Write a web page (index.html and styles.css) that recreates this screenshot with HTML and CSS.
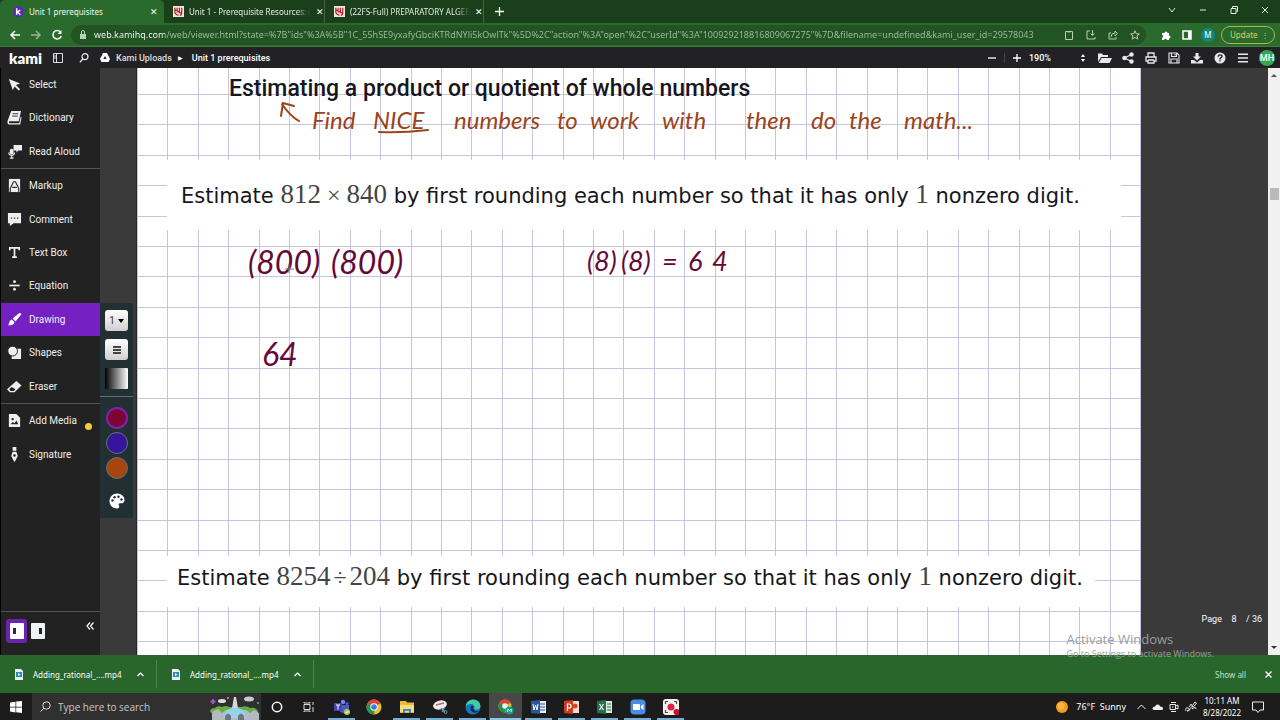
FILE: index.html
```html
<!DOCTYPE html>
<html lang="en">
<head>
<meta charset="utf-8">
<title>Unit 1 prerequisites</title>
<link rel="stylesheet" href="styles.css">
</head>
<body>
<header class="tabs">
  <div class="tab tab-active"><svg class="fav" viewBox="0 0 12 12"><circle cx="6" cy="6" r="6" fill="#5b2bb5"/><path d="M4 2.5v7M8 4.5L5 6.5l3 3" fill="none" stroke="#fff" stroke-width="1.6"/></svg><span class="tab-name">Unit 1 prerequisites</span><button class="x" aria-label="Close tab">✕</button></div>
  <div class="tab"><svg class="fav" viewBox="0 0 12 12"><path fill="#f4e4e0" d="M0 0h12v12H0z"/><path d="M2 2v5q1 3 4 3M4.500 2v5M7 2v6M9.500 2v5q0 3-2 3M2 4l7 4" fill="none" stroke="#b51f2b" stroke-width="1.300"/></svg><span class="tab-name fade">Unit 1 - Prerequisite Resources: (</span><button class="x" aria-label="Close tab">✕</button></div>
  <div class="tab tab-line"><svg class="fav" viewBox="0 0 12 12"><path fill="#f4e4e0" d="M0 0h12v12H0z"/><path d="M2 2v5q1 3 4 3M4.500 2v5M7 2v6M9.500 2v5q0 3-2 3M2 4l7 4" fill="none" stroke="#b51f2b" stroke-width="1.300"/></svg><span class="tab-name fade">(22FS-Full) PREPARATORY ALGEB</span><button class="x" aria-label="Close tab">✕</button></div>
  <button class="newtab" aria-label="New tab"><svg width="9" height="9" viewBox="0 0 9 9"><path d="M4.500 0v9M0 4.500h9" stroke="#fff" stroke-width="1.300"/></svg></button>
  <div class="winctl">
    <button aria-label="Search tabs"><svg width="10" height="10" viewBox="0 0 10 10"><path d="M2 3l3 4 3-4"/></svg></button>
    <button aria-label="Minimize"><svg width="10" height="10" viewBox="0 0 10 10"><path d="M2 5h6"/></svg></button>
    <button aria-label="Restore"><svg width="10" height="10" viewBox="0 0 10 10"><path d="M2 3.500h5v5H2zM3.500 3V1.500h5v5H7.500"/></svg></button>
    <button aria-label="Close"><svg width="10" height="10" viewBox="0 0 10 10"><path d="M2 2l6 6M8 2l-6 6"/></svg></button>
  </div>
</header>

<div class="toolbar">
  <nav class="nav">
    <button aria-label="Back"><svg width="12" height="12" viewBox="0 0 12 12"><path d="M11 6H2M6 2L2 6l4 4"/></svg></button>
    <button aria-label="Forward" class="dim"><svg width="12" height="12" viewBox="0 0 12 12"><path d="M1 6h9M6 2l4 4-4 4"/></svg></button>
    <button aria-label="Reload"><svg width="12" height="12" viewBox="0 0 12 12"><path d="M9.500 3.200A4.200 4.200 0 1 0 10.200 7"/><path d="M10.500 1v4h-4z" fill="#fff" stroke="none"/></svg></button>
  </nav>
  <div class="address">
    <svg width="6" height="9" viewBox="0 0 6 9"><path d="M0 4h6v5H0z" fill="#b9d0b8"/><path d="M1.500 4V2a1.500 1.500 0 0 1 3 0v2" fill="none" stroke="#b9d0b8"/></svg>
    <input class="url" aria-label="Address" value="web.kamihq.com/web/viewer.html?state=%7B&quot;ids&quot;%3A%5B&quot;1C_55hSE9yxafyGbciKTRdNYli5kOwlTk&quot;%5D%2C&quot;action&quot;%3A&quot;open&quot;%2C&quot;userId&quot;%3A&quot;100929218816809067275&quot;%7D&amp;filename=undefined&amp;kami_user_id=29578043">
    <div class="addr-icons">
      <svg viewBox="0 0 10 10"><path d="M1.500 1.500h7v8h-7zM3.500 2h3"/></svg>
      <svg viewBox="0 0 10 10"><path d="M4 1H1v8h8V7M6.500 0v5M4.500 3.500l2 2 2-2"/></svg>
      <svg viewBox="0 0 10 10"><path d="M3 3H1v6h7V7M3 7q0-4 4-4V1l2.500 2.500L7 6V4.500"/></svg>
      <svg viewBox="0 0 10 10"><path d="M5 .8l1.200 2.900 3.200.2-2.400 2 .8 3.200L5 7.400 2.200 9.100 3 5.900.6 3.900l3.200-.2z"/></svg>
    </div>
  </div>
  <button class="ext" aria-label="Extensions"><svg width="10" height="10" viewBox="0 0 10 10"><path fill="#fff" d="M1 3h2.500a1.500 1.500 0 1 1 3 0H8v2.500a1.500 1.500 0 0 1 0 3V10H5.800a1.300 1.300 0 0 0-2.600 0H1V7.500a1.300 1.300 0 0 0 0-2.600z"/></svg></button>
  <button class="ext" aria-label="Side panel"><svg width="10" height="10" viewBox="0 0 10 10"><path d="M1 1h8v8H1z" fill="none" stroke="#fff" stroke-width="1.500"/><path d="M6 1h3v8H6z" fill="#fff"/></svg></button>
  <button class="profile">M</button>
  <button class="update">Update <span>⋮</span></button>
</div>

<div class="kamibar">
  <span class="logo">kami</span>
  <button aria-label="Toggle panel"><svg width="10" height="10" viewBox="0 0 10 10"><path d="M.5 .5h9v9h-9zM3.500 1v8M1 3h2M1 5h2" fill="none" stroke="#ddd"/></svg></button>
  <button class="find" aria-label="Search"><svg width="10" height="10" viewBox="0 0 10 10"><circle cx="6" cy="3.700" r="3" fill="none" stroke="#eee" stroke-width="1.200"/><path d="M3.800 6L.8 9.400" stroke="#eee" stroke-width="1.300"/></svg></button>
  <svg class="drive" width="10" height="9" viewBox="0 0 10 9"><path fill="#fff" d="M3 0h4l3 6-1.500 3h-7L0 6z"/><path fill="#222" d="M5 3L3.300 6h3.400z"/></svg>
  <a href="#" class="crumb">Kami Uploads</a><span class="caret">▶</span><a href="#" class="crumb doc">Unit 1 prerequisites</a>
  <div class="kright">
    <button aria-label="Zoom out"><svg width="8" height="8" viewBox="0 0 8 8"><path d="M0 4h8" stroke="#fff" stroke-width="1.300"/></svg></button><i class="sep"></i>
    <button aria-label="Zoom in"><svg width="8" height="8" viewBox="0 0 8 8"><path d="M0 4h8M4 0v8" stroke="#fff" stroke-width="1.300"/></svg></button>
    <select class="zoom" aria-label="Zoom level"><option>190%</option></select>
    <svg class="updown" width="4" height="8" viewBox="0 0 4 8"><path fill="#fff" d="M2 0l2 3H0zM2 8L0 5h4z"/></svg>
    <div class="kicons">
      <button aria-label="Open"><svg viewBox="0 0 14 12"><path fill="#e8e8f2" d="M0 10V1.500h4l1 1.500h5v2H3zM3.500 6H14l-2.500 5H.8z"/></svg></button>
      <button aria-label="Share"><svg viewBox="0 0 14 12"><g fill="#e8e8f2"><circle cx="3.500" cy="6" r="2.300"/><circle cx="10.500" cy="2.500" r="2.200"/><circle cx="10.500" cy="9.500" r="2.200"/></g><path d="M10.500 2.500L3.500 6l7 3.500" fill="none" stroke="#e8e8f2" stroke-width="1.200"/></svg></button>
      <button aria-label="Print"><svg viewBox="0 0 14 12"><path d="M4 5V1h6v4M2 9V5h10v4h-2v2H4V9zM4 8h6" fill="none" stroke="#e8e8f2" stroke-width="1.300"/></svg></button>
      <button aria-label="Save"><svg viewBox="0 0 14 12"><path d="M2 1h8l2 2v8H2zM4.500 1v3.500h5V1M4 11V7h6v4M8 2v1.500" fill="none" stroke="#e8e8f2" stroke-width="1.100"/></svg></button>
      <button aria-label="Download"><svg viewBox="0 0 14 12"><path fill="#e8e8f2" d="M5.500 1h3v3.500H11l-4 4-4-4h2.500zM1 8h3l3 2.500L10 8h3v3.500H1z"/></svg></button>
      <button aria-label="Help"><svg viewBox="0 0 14 12"><circle cx="7" cy="6" r="5.500" fill="#e8e8f2"/><path d="M5.200 4.800q0-1.900 1.900-1.900T9 4.600Q9 5.600 7 6.400V7.400M7 8.300v1.300" fill="none" stroke="#222" stroke-width="1.400"/></svg></button>
      <button aria-label="Menu"><svg viewBox="0 0 14 12"><path d="M2 2.200h10M2 6h10M2 9.800h10" stroke="#e8e8f2" stroke-width="1.500"/></svg></button>
    </div>
    <button class="mh">MH</button>
  </div>
</div>

<main class="main">
  <aside class="side">
    <div class="group basics">
      <button><svg viewBox="0 0 16 16"><path fill="#eee" d="M2 2l12 5-4.500 1.500L14 13l-1.500 1.500L8 10l-1.800 4z"/></svg>Select</button>
      <button><svg viewBox="0 0 16 16"><path fill="#eee" d="M4.500 1H15l-2.500 11H3q-1 0-1 1t1 1h10l1.700-7 .8 1-1.500 7.500H2.500Q0 15 .5 12z"/><path d="M6 4h6M5.500 6.500h6" stroke="#333"/></svg>Dictionary</button>
      <button><svg viewBox="0 0 16 16"><path fill="#eee" d="M7 1h9v6h-4l-2 2V7H7z"/><rect x="3" y="5" width="4" height="6" rx="2" fill="#eee"/><path d="M2 9q0 3 3 3t3-3M5 12v3M3 15h4" fill="none" stroke="#eee" stroke-width="1.200"/></svg>Read Aloud</button>
    </div>
    <div class="group markups">
      <button><svg viewBox="0 0 16 16"><path fill="#eee" d="M2 1h12v14H2z"/><path d="M3.500 15V11L7 4h2l3.500 7v4M5.500 10h5" fill="none" stroke="#333" stroke-width="1.300"/></svg>Markup</button>
      <button><svg viewBox="0 0 16 16"><path fill="#eee" d="M1 1h14v11H7l-4 3v-3H1z"/><path d="M4 6.500h1.500M7.300 6.500h1.500M10.600 6.500h1.500" stroke="#333" stroke-width="1.500"/></svg>Comment</button>
      <button><svg viewBox="0 0 16 16"><path d="M3 5.500V3h10v2.500M8 3v10M5.500 13h5" fill="none" stroke="#eee" stroke-width="1.800"/></svg>Text Box</button>
      <button><svg viewBox="0 0 16 16"><path d="M2.500 8h11" stroke="#eee" stroke-width="1.800"/><circle cx="8" cy="4" r="1.500" fill="#eee"/><circle cx="8" cy="12" r="1.500" fill="#eee"/></svg>Equation</button>
      <button class="on"><svg viewBox="0 0 16 16"><path fill="#fff" d="M13 1q3 0 2 2L9 10 6 7zM5 8l3 3q-1 4-7 3 1.500-1 1.500-3T5 8z"/></svg>Drawing</button>
      <button><svg viewBox="0 0 16 16"><path fill="#eee" d="M9.500 4H15v11H5v-4z"/><circle cx="6" cy="6.500" r="5.200" fill="#eee" stroke="#222"/></svg>Shapes</button>
      <button><svg viewBox="0 0 16 16"><path fill="#eee" d="M10 2l5.500 5L8 14H3L0 11z"/><path d="M5 8.500L2.300 11l1.600 1.700h3.500L9 11" fill="#222"/></svg>Eraser</button>
    </div>
    <div class="group extras">
      <button><svg viewBox="0 0 16 16"><path fill="#eee" d="M2 1h8l4 4v10H2z"/><circle cx="6" cy="6.500" r="1.300" fill="#222"/><path d="M4 12l2-2.500L8 11l2-3 2 4z" fill="#222"/></svg>Add Media<i class="dot"></i></button>
      <button><svg viewBox="0 0 16 16"><path fill="#eee" d="M6 0h4v4H6zM6 5h4l1.500 4.500L8.500 15.500h-1L4.500 9.500z"/><circle cx="8" cy="9" r="1.300" fill="#222"/></svg>Signature</button>
    </div>
    <div class="sidefoot">
      <button class="dock dock-on" aria-label="Dock left"><svg width="14" height="16" viewBox="0 0 14 16"><rect width="14" height="16" rx="1" fill="#fff"/><path d="M3 5h3v6H3z" fill="#36205c"/></svg></button>
      <button class="dock" aria-label="Dock right"><svg width="14" height="16" viewBox="0 0 14 16"><rect width="14" height="16" rx="1" fill="#eef2f5"/><path d="M8 5h3v6H8z" fill="#222"/></svg></button>
      <button class="collapse" aria-label="Collapse"><svg width="8" height="8" viewBox="0 0 8 8"><path d="M4 .5L1 4l3 3.500M7.500 .5L4.500 4l3 3.500" fill="none" stroke="#fff" stroke-width="1.200"/></svg></button>
    </div>
  </aside>

  <div class="rail">
    <div class="palette">
      <div class="pal-top">
        <button class="box">1<svg width="6" height="4" viewBox="0 0 6 4"><path d="M0 0h6L3 4z"/></svg></button>
        <button class="box" aria-label="Line style"><svg width="8" height="8" viewBox="0 0 8 8"><path d="M0 1h8M0 4h8M0 7h8" stroke="#111" stroke-width="1.500"/></svg></button>
        <button class="box shade" aria-label="Opacity"></button>
      </div>
      <div class="pal-bottom">
        <button class="ink ink-wine" aria-label="Wine"></button>
        <button class="ink ink-blue" aria-label="Blue"></button>
        <button class="ink ink-orange" aria-label="Orange"></button>
        <button class="more" aria-label="More colors"><svg width="16" height="16" viewBox="0 0 16 16"><path fill="#fff" d="M8 .5c4.500 0 7.500 3 7.500 6.500 0 2.500-2 3.500-4 3.300-1.500-.1-2.500.7-1.500 2.200.8 1.500 0 3-2 3C3.500 15.500.5 12 .5 8S4 .5 8 .5z"/><g fill="#24303a"><circle cx="3.500" cy="7.500" r="1.200"/><circle cx="5.500" cy="4.200" r="1.200"/><circle cx="9.500" cy="3.700" r="1.200"/><circle cx="12.500" cy="6.500" r="1.200"/></g></svg></button>
      </div>
    </div>
  </div>

  <article class="page">
    <svg class="grid" width="100%" height="100%" aria-hidden="true">
      <defs><pattern id="squares" width="152" height="152" y="26" patternUnits="userSpaceOnUse"><path d="M.5 0v152M30.500 0v152M61.500 0v152M91.500 0v152M122.500 0v152M0 .5h152M0 30.500h152M0 61.500h152M0 91.500h152M0 122.500h152" stroke="#c5c4e2" fill="none"/></pattern></defs>
      <rect width="100%" height="100%" fill="url(#squares)"/>
    </svg>
    <h1 class="title">Estimating a product or quotient of whole numbers</h1>
    <p class="problem">Estimate <span class="num">812<span class="op"> × </span>840</span> by first rounding each number so that it has only <span class="num">1</span> nonzero digit.</p>
    <p class="problem second">Estimate <span class="num">8254<span class="op tight">÷</span>204</span> by first rounding each number so that it has only <span class="num">1</span> nonzero digit.</p>
    <svg class="notes" width="100%" height="100%">
      <g class="arrow"><path d="M162 53Q153 48 145 36M144 48L146 35 157 38"/><path d="M242 64Q265 65 291 62"/></g>
      <g class="pen-orange">
        <text x="175" y="61">Find</text><text x="236" y="61">NICE</text><text x="317" y="61">numbers</text><text x="420" y="61">to</text><text x="453" y="61">work</text><text x="525" y="61">with</text><text x="609" y="61">then</text><text x="674" y="61">do</text><text x="712" y="61">the</text><text x="767" y="61">math...</text>
      </g>
      <g class="pen-wine">
        <text x="111" y="206">(800)</text><text x="194" y="206">(800)</text><text x="125" y="298">64</text>
        <g class="small"><text x="450" y="203">(8)</text><text x="484" y="203">(8)</text><text x="525" y="203">=</text><text x="551" y="203">6</text><text x="575" y="203">4</text></g>
      </g>
      <path d="M152 196v9M148 201h9" stroke="#777"/>
    </svg>
  </article>
  <div class="gutter">
    <label class="pager">Page <input class="pageno" value="8"> <span>/ 36</span></label>
  </div>
  <div class="scroll"><i class="up"></i><i class="thumb"></i><i class="down"></i></div>
  <div class="activate"><b>Activate Windows</b><span>Go to Settings to activate Windows.</span></div>
</main>

<section class="downloads">
  <div class="dl"><svg width="8" height="11" viewBox="0 0 8 11"><path fill="#e9f3f8" d="M0 0h6l2 2v9H0z"/><path fill="#3189b5" d="M1 3h6v5H1z"/><path fill="#fff" d="M3 4l2.500 1.500L3 7z"/></svg><button class="dl-name">Adding_rational_....mp4</button><button aria-label="Options"><svg width="7" height="5" viewBox="0 0 7 5"><path d="M.5 4l3-3 3 3" fill="none" stroke="#fff" stroke-width="1.200"/></svg></button></div>
  <div class="dl"><svg width="8" height="11" viewBox="0 0 8 11"><path fill="#e9f3f8" d="M0 0h6l2 2v9H0z"/><path fill="#3189b5" d="M1 3h6v5H1z"/><path fill="#fff" d="M3 4l2.500 1.500L3 7z"/></svg><button class="dl-name">Adding_rational_....mp4</button><button aria-label="Options"><svg width="7" height="5" viewBox="0 0 7 5"><path d="M.5 4l3-3 3 3" fill="none" stroke="#fff" stroke-width="1.200"/></svg></button></div>
  <button class="showall">Show all</button><button class="dlx" aria-label="Close"><svg width="7" height="7" viewBox="0 0 7 7"><path d="M.5 .5l6 6M6.500 .5l-6 6" stroke="#fff" stroke-width="1.400"/></svg></button>
</section>

<footer class="taskbar">
  <button class="start" aria-label="Start"><svg width="12" height="12" viewBox="0 0 12 12"><path fill="#fff" d="M0 1.500l5.500-.8v5H0zM6.200.6L12 0v5.700H6.200zM0 6.400h5.500v5L0 10.600zM6.200 6.400H12V12l-5.800-.7z"/></svg></button>
  <div class="search"><svg width="11" height="11" viewBox="0 0 11 11"><circle cx="6.500" cy="4.500" r="3.700" fill="none" stroke="#ddd"/><path d="M4 7.200L.5 10.500" stroke="#ddd"/></svg><input aria-label="Search" placeholder="Type here to search">
    <svg class="scene" width="52" height="24" viewBox="0 0 52 24"><path d="M4 3v5M1.500 5.500h5" stroke="#9b59d0" stroke-width="2"/><ellipse cx="13" cy="5" rx="4" ry="2" fill="#ddd"/><ellipse cx="40" cy="3" rx="5" ry="2.500" fill="#c9c9d2"/><path d="M1 16q0-4 5-4 3-3 7-1 4-2 7 0h13q4-2 8 1 7-1 8 4l-8 4H8z" fill="#64ad45"/><path d="M3 16l6-3 4 4 4-3h20l4 3 4-3 5 3v7H3z" fill="#b4b9c1"/><path d="M23 12l2-11h2l2 11z" fill="#d6d6de"/><path d="M18 14q8-5 16 0l3 8H14z" fill="#93d4e8"/><path d="M16 24v-4q3-5 6 0v4M29 24v-4q3-5 6 0v4" fill="#70747d"/><circle cx="49" cy="7" r="1" fill="#4bb6dc"/><circle cx="19" cy="2" r="1" fill="#e9a35a"/></svg></div>
  <div class="apps">
    <button class="plain" aria-label="Cortana"><svg viewBox="0 0 16 16"><circle cx="8" cy="8" r="4.700" fill="none" stroke="#fff" stroke-width="1.500"/></svg></button>
    <button class="plain" aria-label="Task view"><svg viewBox="0 0 16 16"><path d="M3 5.500h6v5H3zM3 3V4h6V3M3 13v-1h6v1M12 3v3M12 8v5" fill="none" stroke="#ddd"/></svg></button>
    <button aria-label="Teams"><svg viewBox="0 0 16 16"><circle cx="9" cy="3" r="2.200" fill="#7b83eb"/><circle cx="13" cy="4.500" r="1.600" fill="#5059c9"/><path d="M5 6h10v5q-2 4-6 3t-4-4z" fill="#5059c9"/><path d="M0 4h8v8H0z" fill="#4049ad"/><path d="M2 6h4M4 6v4.500" stroke="#fff"/><circle cx="13" cy="13" r="3" fill="#a8cf5b"/><path d="M11.500 13l1 1 2-2" fill="none" stroke="#fff"/></svg></button>
    <button class="plain" aria-label="Chrome"><svg viewBox="0 0 16 16"><circle cx="8" cy="8" r="7.500" fill="#e8be37"/><path d="M1.500 4.250A7.500 7.500 0 0 1 14.500 4.250L8 8z" fill="#db4437"/><path d="M1.500 4.250A7.500 7.500 0 0 0 8 15.500L9 8z" fill="#27924b"/><circle cx="8" cy="8" r="3.700" fill="#fff"/><circle cx="8" cy="8" r="2.800" fill="#3c79e0"/></svg></button>
    <button aria-label="File Explorer"><svg viewBox="0 0 16 16"><path d="M1 2h6l1 1.500h7V14H1z" fill="#e7ba3d"/><path d="M1 6h14v7H1z" fill="#f8db7a"/><path d="M4 10h8v4h-2v-2H6v2H4z" fill="#3a8bc4"/></svg></button>
    <button aria-label="Snip"><svg viewBox="0 0 16 16"><ellipse cx="8" cy="6" rx="7" ry="4.500" fill="#eee" transform="rotate(-15 8 6)"/><path d="M4 6l8-2" stroke="#d25b64" stroke-width="1.500"/><path d="M9 9l4 4M13 8l-3 5" stroke="#6d9bb2" stroke-width="1.300"/><circle cx="13.500" cy="13" r="1.500" fill="none" stroke="#6d9bb2"/></svg></button>
    <button aria-label="Edge"><svg viewBox="0 0 16 16"><circle cx="8" cy="8" r="7.500" fill="#1676ba"/><path d="M.8 8Q1 1 8 .5q7 0 7.500 6.500-.5 3.500-4 3.500-3 0-2-2Q9 4.500 6 5 2 5 .8 8z" fill="#43c8a9"/><path d="M6 7q-2 5 3 6.500 3 .6 5-1.500-5 1-6-3 1-1 .5-2z" fill="#102d4c"/></svg></button>
    <button class="current" aria-label="Chrome profile"><svg viewBox="0 0 16 16"><circle cx="7" cy="7" r="6.500" fill="#d9b93f"/><path d="M1.400 3.700A6.500 6.500 0 0 1 12.600 3.700L7 7z" fill="#db4437"/><path d="M1.400 3.700A6.500 6.500 0 0 0 7 13.500L8 7z" fill="#27924b"/><circle cx="7" cy="7" r="2.800" fill="#eee"/><circle cx="11.500" cy="11.500" r="4" fill="#12a08c"/><path d="M9.800 13V10l1.700 1.700L13.200 10v3" fill="none" stroke="#fff" stroke-width=".8"/></svg></button>
    <button aria-label="Word"><svg viewBox="0 0 16 16"><path d="M6 2h9v12H6z" fill="#e4edf7"/><path d="M9 5h5M9 8h5M9 11h5" stroke="#2b579a"/><path d="M0 2l9-1v14l-9-1z" fill="#2b579a"/><path d="M2 5l1 6 1.500-5L6 11l1-6" fill="none" stroke="#fff"/></svg></button>
    <button aria-label="PowerPoint"><svg viewBox="0 0 16 16"><path d="M6 2h9v12H6z" fill="#f4ddd5"/><circle cx="11" cy="7" r="2.500" fill="#d24726"/><path d="M0 2l9-1v14l-9-1z" fill="#d03b22"/><path d="M3.500 12V5H5q2 0 2 2T5 9H3.500" fill="none" stroke="#fff" stroke-width="1.200"/></svg></button>
    <button aria-label="Excel"><svg viewBox="0 0 16 16"><path d="M6 2h9v12H6z" fill="#dcecdf"/><path d="M10 5h4M10 8h4M10 11h4" stroke="#217346"/><path d="M0 2l9-1v14l-9-1z" fill="#217346"/><path d="M2.500 5l4 6M6.500 5l-4 6" stroke="#fff" stroke-width="1.200"/></svg></button>
    <button aria-label="Zoom"><svg viewBox="0 0 16 16"><rect x=".5" y=".5" width="15" height="15" rx="4" fill="#4a8de0"/><path d="M3 5h6q1 0 1 1v5H4q-1 0-1-1zM11 7l2.500-2v6L11 9z" fill="#fff"/></svg></button>
    <button aria-label="Recorder"><svg viewBox="0 0 16 16"><rect width="16" height="16" rx="3" fill="#f6f3f5"/><path d="M2.500 5V2.500H5M11 2.500h2.500V5M2.500 11v2.500H5" fill="none" stroke="#444" stroke-width="1.200"/><circle cx="8" cy="8" r="3.500" fill="#d9253b"/><circle cx="13.500" cy="13" r="3" fill="#c5122b"/></svg></button>
  </div>
  <div class="tray">
    <svg width="12" height="12" viewBox="0 0 12 12"><circle cx="6" cy="6" r="6" fill="#f39b1d"/><circle cx="5" cy="5" r="3.500" fill="#fbb73d"/></svg><span class="temp">76°F&nbsp; Sunny</span>
    <svg width="9" height="6" viewBox="0 0 9 6"><path d="M.5 5l4-4 4 4" fill="none" stroke="#eee"/></svg>
    <svg width="11" height="8" viewBox="0 0 11 8"><path d="M2 7q-2-.5-1.500-2T3 3.500Q4 1 6 1.500T8 3.500q3 0 3 2T9 7z" fill="#eee"/></svg>
    <svg width="10" height="12" viewBox="0 0 10 12"><path d="M1 3.500h5.500v5H1zM6.500 5L9 4v4L6.500 7M2 1.500h5M2 10.500h5M3 6h1.500" fill="none" stroke="#eee"/></svg>
    <svg width="12" height="11" viewBox="0 0 12 11"><path d="M1 10q-1-4 2-3t-1 3q3 0 3-2l5-7 1.500 1L7 8q4-3 4 0M4 6l2-3 2 3" fill="none" stroke="#ddd"/></svg>
    <div class="clock"><span>10:11 AM</span><span>8/28/2022</span></div>
    <svg width="12" height="12" viewBox="0 0 12 12"><path d="M.5 1h11v8H8l-2 2.500L4 9H.5z" fill="none" stroke="#eee"/></svg>
  </div>
</footer>
</body>
</html>
```
FILE: styles.css
```css
* { box-sizing: border-box; }
body { margin: 0; height: 100vh; display: flex; flex-direction: column; overflow: hidden; background: #222; color: #fff; font-family: "Noto Sans", "Open Sans", sans-serif; font-size: 10px; }
button, input, select { font: inherit; color: inherit; background: none; border: 0; padding: 0; margin: 0; outline: 0; }
button { display: flex; align-items: center; justify-content: center; }
svg { flex: none; display: block; }

.tabs { display: flex; flex: none; height: 23px; background: #1b3f1b; }
.tab { display: flex; align-items: center; width: 160px; padding: 0 4px 0 9px; gap: 5px; font-size: 8px; color: #e2ece1; }
.tab-active { width: 164px; padding: 0 6px 0 13px; background: #2a6a2c; border-radius: 5px 5px 0 0; color: #f3f8f2; }
.tab-line { border-left: 1px solid #416541; border-right: 1px solid #416541; }
.fav { width: 11px; height: 11px; }
.tab-name { flex: 1; white-space: nowrap; }
.fade { mask-image: linear-gradient(90deg, #000 88%, transparent); }
.x { font-size: 9px; width: 8px; color: #fff; }
.newtab { width: 30px; }
.winctl { display: flex; margin-left: auto; align-items: center; padding: 0 10px 3px 0; gap: 21px; }
.winctl svg { fill: none; stroke: #e4eae4; }

.toolbar { display: flex; flex: none; align-items: center; height: 24px; background: #2a6a2c; padding: 0 5px 0 9px; border-bottom: 1px solid #3b7b3d; }
.nav { display: flex; gap: 9px; }
.nav svg { fill: none; stroke: #fff; stroke-width: 1.5; }
.nav .dim { opacity: .5; }
.address { flex: 1; min-width: 0; display: flex; align-items: center; height: 20px; margin: 0 9px 0 8px; padding: 0 6px 0 9px; border-radius: 10px; background: #215323; }
.url { flex: 1; min-width: 0; margin-left: 8px; font-size: 9px; color: transparent; background: linear-gradient(90deg, #fff 71px, #a5bda4 71px); background-clip: text; }
.addr-icons { display: flex; gap: 12px; }
.addr-icons svg { width: 10px; height: 10px; fill: none; stroke: #b8cdb7; }
.ext { width: 21px; }
.profile { width: 14px; height: 14px; margin: 0 6px 0 4px; border-radius: 50%; background: #12877c; font-size: 8px; }
.update { width: 54px; height: 18px; justify-content: space-between; padding: 0 5px 0 8px; border: 1px solid #b0b54a; border-radius: 9px; color: #d5d36d; font-size: 8px; }

.kamibar { display: flex; flex: none; align-items: center; height: 21px; padding: 0 5px 0 9px; background: #222225; font: 500 9px Roboto, sans-serif; }
.logo { width: 44px; font: 800 15px/16px Lato, sans-serif; }
.find { margin: 0 11px 0 16px; }
.crumb { margin-left: 6px; color: #ddd; text-decoration: none; }
.caret { font-size: 6px; margin-left: 6px; }
.doc { margin-left: 9px; color: #fff; }
.kright { display: flex; align-items: center; margin-left: auto; }
.sep { width: 1px; height: 10px; background: #444; margin: 0 8px; }
.zoom { appearance: none; width: 50px; margin-left: 8px; }
.updown { margin: 0 13px 0 2px; }
.kicons { display: flex; gap: 9px; }
.kicons svg { width: 14px; height: 12px; }
.mh { width: 16px; height: 16px; margin-left: 9px; border-radius: 50%; background: #35a952; }

.main { position: relative; display: flex; flex: 1; min-height: 0; background: #3a3a3a; font-family: Roboto, sans-serif; }
.side { display: flex; flex-direction: column; flex: none; width: 100px; background: #222; border-left: 1px solid #000; }
.group { display: grid; border-bottom: 1px solid #555; }
.basics { min-height: 101px; }
.markups { min-height: 235px; }
.extras { min-height: 67px; border: 0; }
.group button { position: relative; width: 100%; justify-content: flex-start; gap: 7px; padding-left: 6px; color: #eee; }
.group svg { width: 15px; height: 15px; }
.group .on { background: #7420c2; }
.dot { position: absolute; right: 8px; bottom: 8px; width: 7px; height: 7px; border-radius: 50%; background: #f6c945; }
.sidefoot { display: flex; align-items: flex-start; margin-top: auto; height: 44px; border-top: 1px solid #555; padding: 7px 6px 0 5px; }
.dock { width: 21px; height: 24px; border-radius: 3px; }
.dock-on { background: #6b22ae; }
.collapse { margin: 3px 0 0 auto; }

.rail { flex: none; width: 37px; padding-top: 235px; border-right: 1px solid #25252c; }
.palette { width: 33px; background: #233033; }
.pal-top { display: flex; flex-direction: column; align-items: center; gap: 8px; padding: 7px 0; border-bottom: 1px solid #64706f; }
.box { width: 23px; height: 21px; border-radius: 3px; gap: 3px; color: #333; background: linear-gradient(#fff, #cfcfcf); }
.shade { background: linear-gradient(90deg, #000, #fff); border-radius: 1px; }
.pal-bottom { display: flex; flex-direction: column; align-items: center; gap: 3px; padding: 10px 0 9px; }
.ink { width: 22px; height: 22px; border-radius: 50%; border: 1px solid #62717a; }
.ink-wine { background: #7d0534; border: 2px solid #7d24ac; }
.ink-blue { background: #35159a; }
.ink-orange { background: #a8440d; }
.more { margin-top: 11px; }

.page { position: relative; flex: 1; min-width: 0; padding-top: 7px; overflow: hidden; background: #fff; color: #16161c; }
.grid, .notes { position: absolute; inset: 0; }
.title { position: relative; margin: 0 0 0 92px; font: 500 23px/28px Roboto, sans-serif; white-space: nowrap; }
.problem { position: relative; height: 70px; margin: 57px 20px 0 30px; padding-left: 14px; background: #fff; font: 21px/68px "DejaVu Sans", sans-serif; white-space: nowrap; }
.second { height: 51px; margin: 326px 46px 0 30px; padding-left: 10px; line-height: 40px; }
.num { font-family: "Liberation Serif", serif; font-size: 27px; color: #444; }
.op { font-size: 24px; }
.tight { margin: 0 3px; }
.notes { font-family: Lato, sans-serif; font-style: italic; }
.arrow { fill: none; stroke: #9b431b; stroke-width: 2; stroke-linecap: round; }
.pen-orange { fill: #9b431b; font-size: 24px; }
.pen-wine { fill: #650a38; font-size: 32px; }
.small { font-size: 27px; }

.gutter { flex: none; width: 127px; display: flex; align-items: flex-end; justify-content: flex-end; padding: 0 6px 31px 0; font-size: 9px; }
.pager { display: flex; align-items: center; }
.pageno { width: 14px; margin: 0 5px; text-align: center; }
.scroll { flex: none; display: flex; flex-direction: column; align-items: center; width: 12px; background: #f1f1f1; padding: 6px 0; }
.thumb { width: 9px; height: 12px; margin-top: 111px; background: #b9b9b9; }
.up { border: 3px solid transparent; border-top: 0; border-bottom-color: #555; }
.down { border: 3px solid transparent; border-bottom: 0; border-top-color: #333; margin-top: auto; }
.activate { position: absolute; right: 66px; bottom: -6px; display: flex; flex-direction: column; color: #9d9d9d; font: 9px/14px "Open Sans", sans-serif; }
.activate b { font-size: 13px; line-height: 16px; font-weight: 400; }

.downloads { display: flex; flex: none; align-items: center; height: 38px; background: #28662b; }
.dl { display: flex; align-items: center; width: 157px; height: 28px; padding: 0 12px 0 15px; border-right: 1px solid #4b844c; }
.dl-name { margin: 0 auto 0 10px; font-size: 8px; }
.showall { margin-left: auto; color: #b9e4d2; font-size: 8px; }
.dlx { margin: 0 8px 0 19px; }

.taskbar { display: flex; flex: none; align-items: center; height: 27px; background: #1c1c1c; }
.start { width: 32px; }
.search { display: flex; align-items: center; width: 229px; height: 27px; padding-left: 8px; background: #303030; }
.search input { flex: 1; min-width: 0; margin-left: 7px; font: 10px "Open Sans", sans-serif; }
.search input::placeholder { color: #c9c9c9; opacity: 1; }
.scene { margin-top: 3px; }
.apps { display: flex; height: 27px; }
.apps button { width: 33px; background: linear-gradient(#76aed4, #76aed4) center bottom / 27px 2px no-repeat; }
.apps .plain { width: 32px; background: none; }
.apps .current { background: linear-gradient(#8cc4ea, #8cc4ea) center bottom / 31px 2px no-repeat #474747; }
.apps svg { width: 16px; height: 16px; }
.tray { display: flex; align-items: center; margin-left: auto; padding-right: 16px; gap: 6px; }
.temp { font-size: 9px; margin: 0 5px 0 2px; }
.clock { display: flex; flex-direction: column; align-items: center; margin-right: 5px; font-size: 8px; line-height: 12px; }
```
